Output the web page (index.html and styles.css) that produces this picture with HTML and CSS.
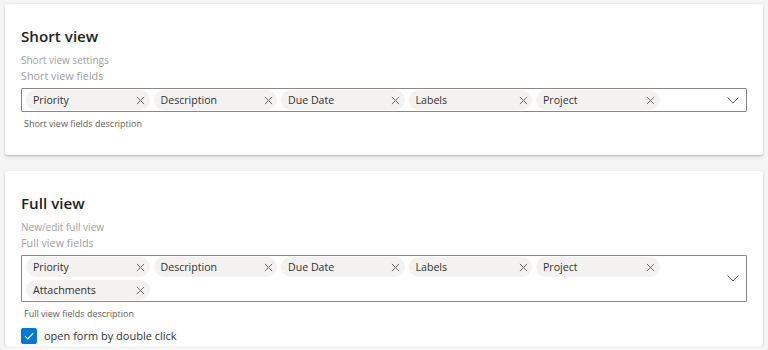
FILE: index.html
```html
<!DOCTYPE html>
<html lang="en">
<head>
    <meta charset="UTF-8">
    <meta name="viewport" content="width=device-width, initial-scale=1.0">
    <title>View settings</title>
    <link rel="stylesheet" href="styles.css">
</head>
<body>
    <div class="page">
        <section class="card">
            <h2 class="card-title">Short view</h2>
            <div class="card-sub">Short view settings</div>
            <label class="field-label">Short view fields</label>
            <div class="combo">
                <div class="tags">
                    <span class="tag"><span class="tag-text">Priority</span><span class="tag-x"><svg viewBox="0 0 10 10"><path d="M1 1L9 9M9 1L1 9"/></svg></span></span>
                    <span class="tag"><span class="tag-text">Description</span><span class="tag-x"><svg viewBox="0 0 10 10"><path d="M1 1L9 9M9 1L1 9"/></svg></span></span>
                    <span class="tag"><span class="tag-text">Due Date</span><span class="tag-x"><svg viewBox="0 0 10 10"><path d="M1 1L9 9M9 1L1 9"/></svg></span></span>
                    <span class="tag"><span class="tag-text">Labels</span><span class="tag-x"><svg viewBox="0 0 10 10"><path d="M1 1L9 9M9 1L1 9"/></svg></span></span>
                    <span class="tag"><span class="tag-text">Project</span><span class="tag-x"><svg viewBox="0 0 10 10"><path d="M1 1L9 9M9 1L1 9"/></svg></span></span>
                </div>
                <span class="chevron"><svg viewBox="0 0 12 7"><path d="M0.5 0.5L6 6L11.5 0.5"/></svg></span>
            </div>
            <div class="field-desc">Short view fields description</div>
        </section>

        <section class="card card-last">
            <h2 class="card-title">Full view</h2>
            <div class="card-sub">New/edit full view</div>
            <label class="field-label">Full view fields</label>
            <div class="combo">
                <div class="tags">
                    <span class="tag"><span class="tag-text">Priority</span><span class="tag-x"><svg viewBox="0 0 10 10"><path d="M1 1L9 9M9 1L1 9"/></svg></span></span>
                    <span class="tag"><span class="tag-text">Description</span><span class="tag-x"><svg viewBox="0 0 10 10"><path d="M1 1L9 9M9 1L1 9"/></svg></span></span>
                    <span class="tag"><span class="tag-text">Due Date</span><span class="tag-x"><svg viewBox="0 0 10 10"><path d="M1 1L9 9M9 1L1 9"/></svg></span></span>
                    <span class="tag"><span class="tag-text">Labels</span><span class="tag-x"><svg viewBox="0 0 10 10"><path d="M1 1L9 9M9 1L1 9"/></svg></span></span>
                    <span class="tag"><span class="tag-text">Project</span><span class="tag-x"><svg viewBox="0 0 10 10"><path d="M1 1L9 9M9 1L1 9"/></svg></span></span>
                    <span class="tag"><span class="tag-text">Attachments</span><span class="tag-x"><svg viewBox="0 0 10 10"><path d="M1 1L9 9M9 1L1 9"/></svg></span></span>
                </div>
                <span class="chevron"><svg viewBox="0 0 12 7"><path d="M0.5 0.5L6 6L11.5 0.5"/></svg></span>
            </div>
            <div class="field-desc">Full view fields description</div>
            <div class="check-row">
                <span class="checkbox"><svg viewBox="0 0 16 16"><path d="M4 8.2L6.8 11L12.2 5.2"/></svg></span>
                <span class="check-label">open form by double click</span>
            </div>
        </section>
    </div>
</body>
</html>
```

FILE: styles.css
```css
* { box-sizing: border-box; margin: 0; padding: 0; }
body {
    font-family: "Open Sans", "Noto Sans", Arial, sans-serif;
    background-color: #f5f5f5;
    color: #323130;
    overflow: hidden;
}
.page {
    padding: 4px 5px 0 5px;
    display: flex;
    flex-direction: column;
    gap: 16px;
}
.card {
    background: white;
    border-radius: 2px;
    box-shadow: 0 1.6px 3.6px rgba(0,0,0,0.13), 0 0.3px 0.9px rgba(0,0,0,0.11);
    padding: 20px 16px 24px 16px;
    display: flex;
    flex-direction: column;
}
.card-last {
    padding-bottom: 2px;
}
.card-title {
    font-size: 15.2px;
    font-weight: 600;
    line-height: 24px;
    color: #201f1e;
}
.card-sub {
    margin-top: 4px;
    font-size: 10px;
    line-height: 16px;
    color: #a19f9d;
}
.field-label {
    font-size: 10.8px;
    line-height: 16px;
    color: #a19f9d;
}
.combo {
    margin-top: 4px;
    border: 1px solid #8a8886;
    border-radius: 1px;
    display: flex;
    align-items: center;
    padding: 1px 0 1px 4px;
}
.tags {
    flex: 1;
    display: flex;
    flex-wrap: wrap;
    gap: 3px 4px;
}
.tag {
    width: 123.5px;
    height: 20px;
    background: #f3f2f1;
    border-radius: 10px;
    display: flex;
    align-items: center;
    padding-left: 7px;
}
.tag-text {
    flex: 1;
    font-size: 10.6px;
    color: #323130;
    white-space: nowrap;
}
.tag-x {
    width: 18px;
    height: 20px;
    display: flex;
    align-items: center;
    justify-content: center;
}
.tag-x svg {
    width: 9px;
    height: 9px;
    fill: none;
    stroke: #605e5c;
    stroke-width: 1;
}
.chevron {
    width: 26px;
    display: flex;
    align-items: center;
    justify-content: center;
}
.chevron svg {
    width: 12px;
    height: 7px;
    fill: none;
    stroke: #605e5c;
    stroke-width: 1;
}
.field-desc {
    margin-top: 5px;
    padding-left: 3px;
    font-size: 9px;
    line-height: 14px;
    color: #605e5c;
}
.check-row {
    margin-top: 7px;
    display: flex;
    align-items: center;
    gap: 7px;
}
.checkbox {
    width: 16px;
    height: 16px;
    background: #0078d4;
    border-radius: 2px;
    display: flex;
}
.checkbox svg {
    width: 16px;
    height: 16px;
    fill: none;
    stroke: white;
    stroke-width: 1.2;
}
.check-label {
    font-size: 11px;
    line-height: 16px;
    color: #323130;
}
```
